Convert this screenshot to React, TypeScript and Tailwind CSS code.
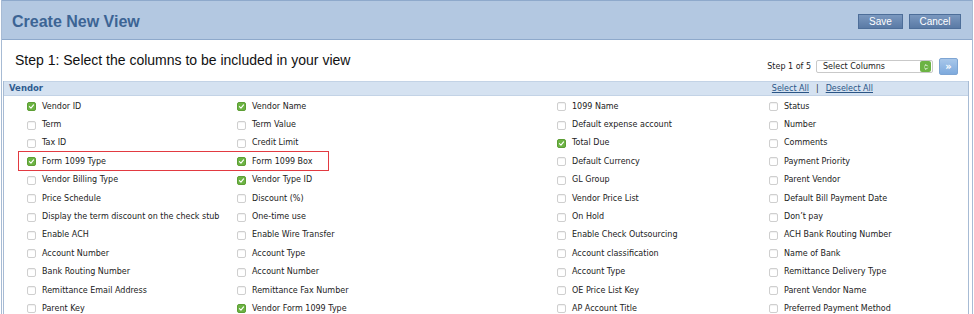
import React from 'react';

type Field = { label: string; checked?: boolean };

// rows of the vendor column picker, four fields per row
const rows: Field[][] = [
  [{ label: 'Vendor ID', checked: true }, { label: 'Vendor Name', checked: true }, { label: '1099 Name' }, { label: 'Status' }],
  [{ label: 'Term' }, { label: 'Term Value' }, { label: 'Default expense account' }, { label: 'Number' }],
  [{ label: 'Tax ID' }, { label: 'Credit Limit' }, { label: 'Total Due', checked: true }, { label: 'Comments' }],
  [{ label: 'Form 1099 Type', checked: true }, { label: 'Form 1099 Box', checked: true }, { label: 'Default Currency' }, { label: 'Payment Priority' }],
  [{ label: 'Vendor Billing Type' }, { label: 'Vendor Type ID', checked: true }, { label: 'GL Group' }, { label: 'Parent Vendor' }],
  [{ label: 'Price Schedule' }, { label: 'Discount (%)' }, { label: 'Vendor Price List' }, { label: 'Default Bill Payment Date' }],
  [{ label: 'Display the term discount on the check stub' }, { label: 'One-time use' }, { label: 'On Hold' }, { label: 'Don’t pay' }],
  [{ label: 'Enable ACH' }, { label: 'Enable Wire Transfer' }, { label: 'Enable Check Outsourcing' }, { label: 'ACH Bank Routing Number' }],
  [{ label: 'Account Number' }, { label: 'Account Type' }, { label: 'Account classification' }, { label: 'Name of Bank' }],
  [{ label: 'Bank Routing Number' }, { label: 'Account Number' }, { label: 'Account Type' }, { label: 'Remittance Delivery Type' }],
  [{ label: 'Remittance Email Address' }, { label: 'Remittance Fax Number' }, { label: 'OE Price List Key' }, { label: 'Parent Vendor Name' }],
  [{ label: 'Parent Key' }, { label: 'Vendor Form 1099 Type', checked: true }, { label: 'AP Account Title' }, { label: 'Preferred Payment Method' }],
];

const Checkbox = ({ checked }: { checked?: boolean }) =>
  checked ? (
    <span className="flex size-[9px] shrink-0 items-center justify-center rounded-[2px] border border-[#5d9e35] bg-[#6cb343]">
      <svg viewBox="0 0 10 10" className="size-[7px]">
        <path d="M2 5.2 L4.2 7.4 L8 2.6" fill="none" stroke="white" strokeWidth="1.6" strokeLinecap="round" strokeLinejoin="round" />
      </svg>
    </span>
  ) : (
    <span className="size-[9px] shrink-0 rounded-[2px] border border-[#cfcfcf] bg-white shadow-[inset_0_1px_1px_rgba(0,0,0,0.06)]" />
  );

const HeaderButton = ({ label, width }: { label: string; width: string }) => (
  <button
    className={`${width} flex h-[15px] items-center justify-center border border-[#4d6e99] bg-gradient-to-b from-[#7a98bf] to-[#5a7aa5] text-[10px] leading-none text-white font-['Liberation_Sans',Arial,sans-serif]`}
  >
    {label}
  </button>
);

export default function App() {
  return (
    <div className="relative h-[314px] w-[974px] overflow-hidden bg-white font-['DejaVu_Sans',Verdana,sans-serif] text-[8px] text-[#222]">
      <div className="mx-[1px] h-full border-x border-[#a7bbd4]">
        {/* title bar */}
        <div className="flex h-[40px] items-center justify-between border-b border-t border-[#8ea9cb] bg-[#b3c8e1] pl-[10px] pr-[11px]">
          <h1 className="pt-[3px] font-['Liberation_Sans',Arial,sans-serif] text-[16px] font-bold leading-none text-[#3c6494]">
            Create New View
          </h1>
          <div className="flex gap-[6px] pt-[3px]">
            <HeaderButton label="Save" width="w-[45px]" />
            <HeaderButton label="Cancel" width="w-[52px]" />
          </div>
        </div>

        {/* step row */}
        <div className="flex h-[41px] items-start justify-between pl-[13px] pr-[14px]">
          <div className="pt-[13px] font-['Liberation_Sans',Arial,sans-serif] text-[14px] leading-none text-[#111]">
            Step 1: Select the columns to be included in your view
          </div>
          <div className="flex items-center pt-[18px]">
            <span className="mr-[5px] leading-none">Step 1 of 5</span>
            <div className="flex h-[13px] w-[117px] items-center justify-between rounded-[2px] border border-[#c9c9c9] bg-white pl-[6px] pr-[1px]">
              <span className="leading-none">Select Columns</span>
              <span className="flex h-[11px] w-[11px] items-center justify-center rounded-[2px] bg-[#6cb343]">
                <svg viewBox="0 0 10 10" className="size-[8px]">
                  <path d="M3 4 L5 2 L7 4 M3 6 L5 8 L7 6" fill="none" stroke="white" strokeWidth="1.2" />
                </svg>
              </span>
            </div>
            <button className="ml-[6px] flex h-[17px] w-[19px] items-center justify-center rounded-[2px] border border-[#7ea5d3] bg-gradient-to-b from-[#a8c7ea] to-[#7eaadd] text-[10px] font-bold leading-none text-white">
              »
            </button>
          </div>
        </div>

        {/* vendor section */}
        <div className="ml-[1px] mr-[3px] border-l border-r border-[#a7bbd4]">
          <div className="flex h-[15px] items-center border-y border-[#c3d3e6] bg-[#d5e2f1] pl-[5px]">
            <span className="text-[8.5px] font-bold leading-none text-[#2e5b90]">Vendor</span>
            <div className="ml-auto mr-[95px] flex items-center gap-[7px] leading-none text-[#2a5586]">
              <span className="underline">Select All</span>
              <span className="text-[#333]">|</span>
              <span className="underline">Deselect All</span>
            </div>
          </div>
          <div className="grid grid-cols-[210px_320px_212px_1fr] pl-[23px] pt-[1.5px]">
            {rows.map((row, i) =>
              row.map((field, j) => (
                <div key={`${i}-${j}`} className="flex h-[18.4px] items-center gap-[6px]">
                  <Checkbox checked={field.checked} />
                  <span className="whitespace-nowrap leading-none">{field.label}</span>
                </div>
              )),
            )}
          </div>
        </div>
      </div>

      {/* red annotation box */}
      <div className="absolute left-[18px] top-[151px] h-[20px] w-[311px] border-[1.5px] border-[#e23a41]" />
    </div>
  );
}
